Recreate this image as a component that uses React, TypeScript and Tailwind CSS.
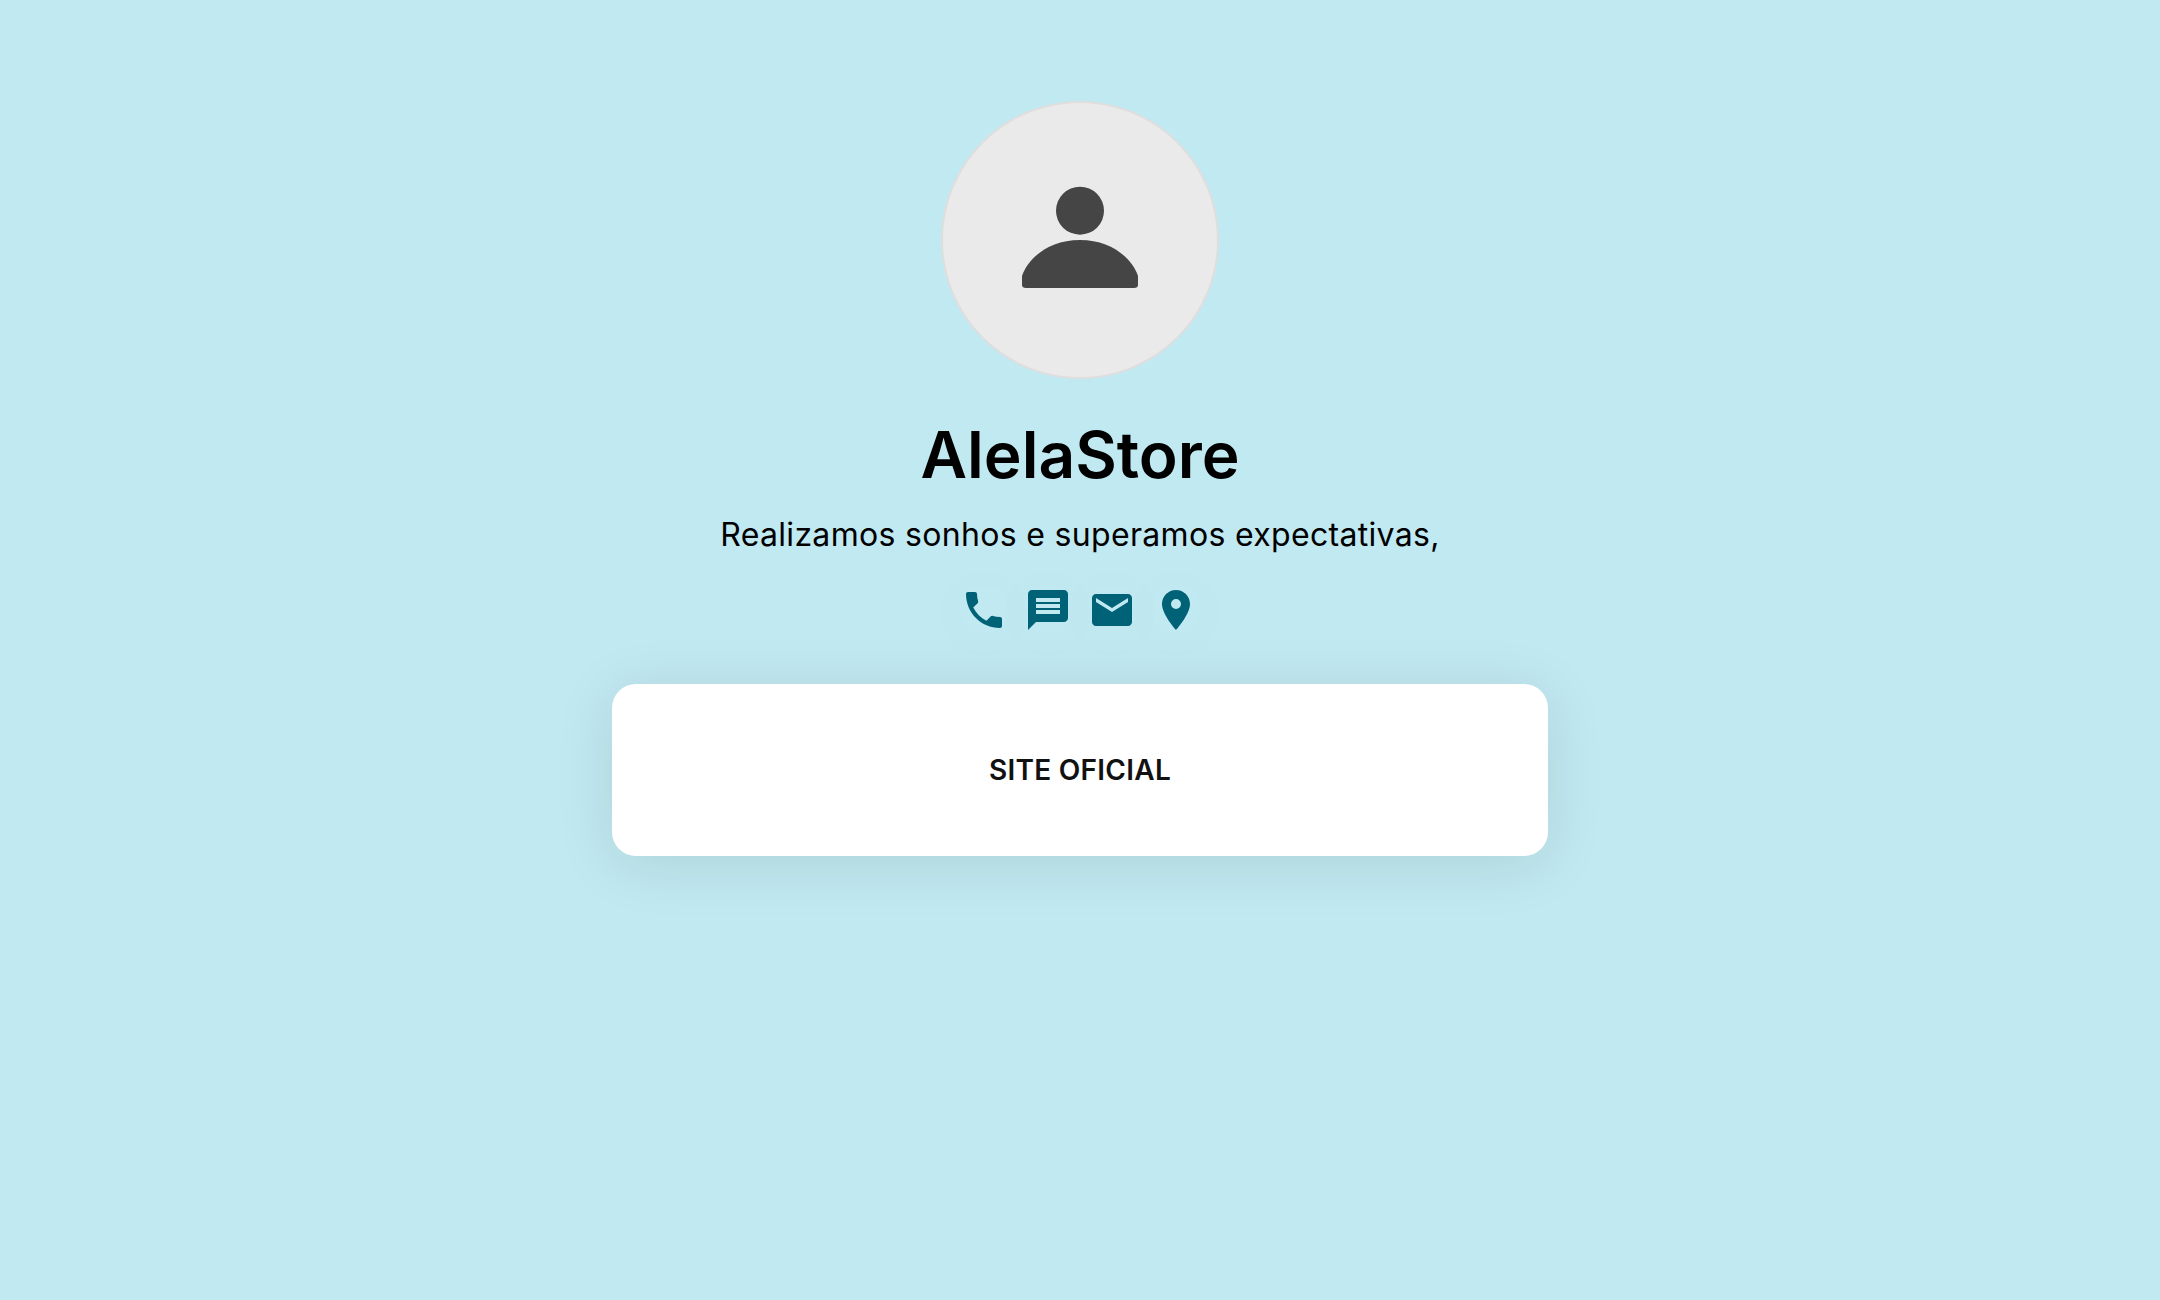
import { MdEmail, MdLocationOn, MdMessage, MdPhone } from "react-icons/md";

const contacts = [
  { label: "Telefone", href: "#telefone", Icon: MdPhone },
  { label: "Mensagem", href: "#mensagem", Icon: MdMessage },
  { label: "E-mail", href: "#email", Icon: MdEmail },
  { label: "Localização", href: "#localizacao", Icon: MdLocationOn },
];

function Avatar() {
  return (
    <div className="flex size-[278px] items-center justify-center rounded-full border-2 border-[#dedede] bg-[#eaeaea]">
      <svg viewBox="0 0 140 140" className="size-35 fill-[#454545]" aria-hidden="true">
        <circle cx="70" cy="40.7" r="24" />
        <path d="M12 106C18 88 39 70 70 70S122 88 128 106V115Q128 118 124 118H16Q12 118 12 115Z" />
      </svg>
    </div>
  );
}

export default function App() {
  return (
    <main className="flex min-h-screen flex-col items-center bg-[#c1e9f1] px-6 pt-[101px] pb-16 font-[Inter,sans-serif] text-black">
      <Avatar />

      <h1 className="mt-9 text-center text-[64px] leading-20 font-semibold">AlelaStore</h1>
      <p className="mt-3 text-center text-[32px] leading-14 tracking-[0.01em]">
        Realizamos sonhos e superamos expectativas,
      </p>

      <nav className="mt-[23px] flex gap-4" aria-label="Contatos">
        {contacts.map(({ label, href, Icon }) => (
          <a
            key={label}
            href={href}
            aria-label={label}
            className="rounded-full text-[#006277] shadow-[0_4px_60px_rgba(0,0,0,0.03)]"
          >
            <Icon className="size-12" />
          </a>
        ))}
      </nav>

      <a
        href="#site"
        className="mt-[50px] flex w-full max-w-[936px] items-center justify-center rounded-3xl bg-white px-8 py-16 text-[28px] leading-11 font-semibold tracking-[0.01em] text-[#111111] shadow-[0_8px_60px_rgba(0,0,0,0.1)]"
      >
        SITE OFICIAL
      </a>
    </main>
  );
}
